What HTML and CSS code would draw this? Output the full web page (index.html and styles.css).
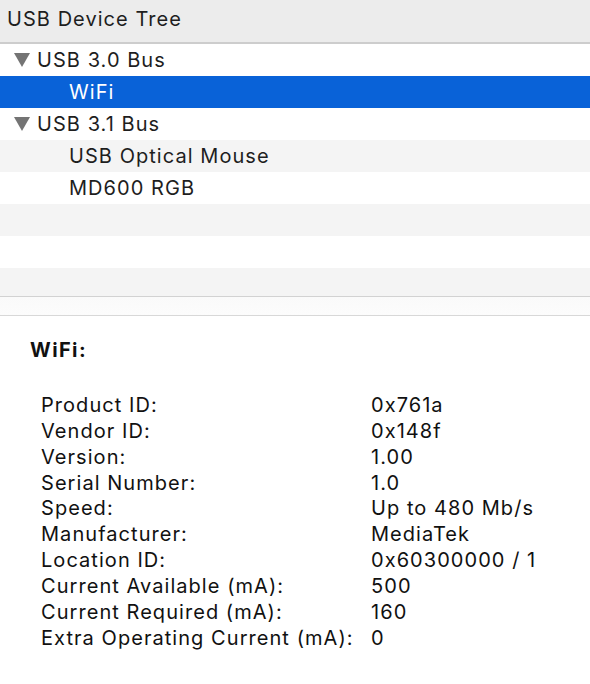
FILE: index.html
```html
<!DOCTYPE html>
<html>
<head>
<meta charset="utf-8">
<link rel="stylesheet" href="styles.css">
</head>
<body>
<div class="window">
  <div class="header">USB Device Tree</div>
  <div class="tree">
    <div class="row"><span class="disclosure"></span><span class="label">USB 3.0 Bus</span></div>
    <div class="row selected child"><span class="label">WiFi</span></div>
    <div class="row"><span class="disclosure"></span><span class="label">USB 3.1 Bus</span></div>
    <div class="row alt child"><span class="label">USB Optical Mouse</span></div>
    <div class="row child"><span class="label">MD600 RGB</span></div>
    <div class="row alt"></div>
    <div class="row"></div>
    <div class="row alt last"></div>
  </div>
  <div class="splitter"></div>
  <div class="detail">
    <div class="detail-title">WiFi:</div>
    <div class="props">
      <div class="k">Product ID:</div><div class="v">0x761a</div>
      <div class="k">Vendor ID:</div><div class="v">0x148f</div>
      <div class="k">Version:</div><div class="v">1.00</div>
      <div class="k">Serial Number:</div><div class="v">1.0</div>
      <div class="k">Speed:</div><div class="v">Up to 480 Mb/s</div>
      <div class="k">Manufacturer:</div><div class="v">MediaTek</div>
      <div class="k">Location ID:</div><div class="v">0x60300000 / 1</div>
      <div class="k">Current Available (mA):</div><div class="v">500</div>
      <div class="k">Current Required (mA):</div><div class="v">160</div>
      <div class="k">Extra Operating Current (mA):</div><div class="v">0</div>
    </div>
  </div>
</div>
</body>
</html>
```
FILE: styles.css
```css
html, body {
  margin: 0;
  padding: 0;
  background: #ffffff;
}
body {
  font-family: Inter, "Liberation Sans", Arial, sans-serif;
  font-size: 20px;
  letter-spacing: 1.05px;
  color: #1c1c1c;
}
.window {
  width: 590px;
  height: 684px;
  overflow: hidden;
}
.header {
  height: 44px;
  box-sizing: border-box;
  padding: 7px 0 0 7px;
  line-height: 24px;
  background: #ececec;
  border-bottom: 2px solid #cdcdcd;
  color: #1e1e1e;
}
.tree {
  display: flex;
  flex-direction: column;
}
.row {
  height: 32px;
  display: flex;
  align-items: center;
  background: #ffffff;
  color: #1e1e1e;
}
.row.alt {
  background: #f4f4f4;
}
.row.last {
  height: 28px;
}
.row.child {
  padding-left: 69px;
}
.row.selected {
  background: #0962d8;
  color: #ffffff;
}
.disclosure {
  width: 0;
  height: 0;
  margin-left: 14px;
  margin-right: 7px;
  border-left: 8px solid transparent;
  border-right: 8px solid transparent;
  border-top: 14px solid #747474;
}
.splitter {
  height: 18px;
  border-top: 1px solid #d2d2d2;
  border-bottom: 1px solid #d8d8d8;
  background: linear-gradient(#fafafa, #fcfcfc);
}
.detail {
  padding: 22px 0 0 30px;
}
.detail-title {
  font-weight: bold;
  letter-spacing: 1.4px;
  line-height: 24px;
  color: #111;
}
.props {
  margin-top: 31px;
  margin-left: 11px;
  display: grid;
  grid-template-columns: 330px auto;
  line-height: 25.85px;
  color: #111;
}
```
